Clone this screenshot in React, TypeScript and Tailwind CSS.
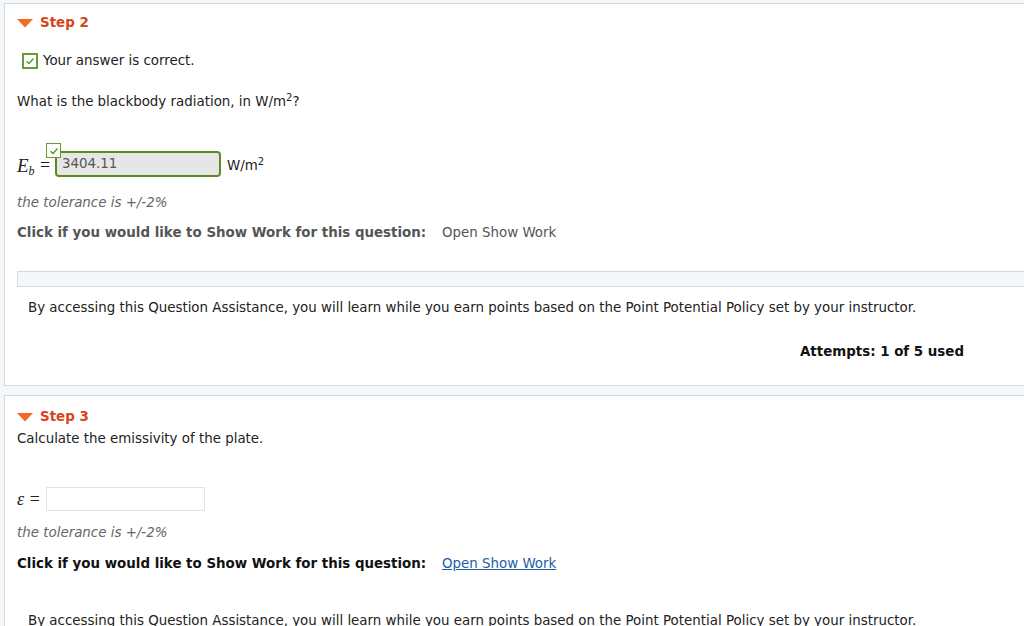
import React from "react";

const FONT = { fontFamily: "'DejaVu Sans', Verdana, sans-serif" };
const SERIF = { fontFamily: "'Liberation Serif', 'Times New Roman', serif" };

function Caret() {
  return (
    <svg width="16" height="9" viewBox="0 0 16 9" className="shrink-0">
      <path d="M0 0 H16 L8 8.5 Z" fill="#f26a25" />
    </svg>
  );
}

function Check({ size = 16, thin = false }: { size?: number; thin?: boolean }) {
  return (
    <span
      className={
        "flex items-center justify-center border-[#6a9c32] bg-white " + (thin ? "border" : "border-2")
      }
      style={{ width: size, height: size }}
    >
      <svg width="10" height="8" viewBox="0 0 10 8">
        <path d="M1.5 4.2 L4 6.5 L8.5 1.5" fill="none" stroke="#5a9a26" strokeWidth="1.4" />
      </svg>
    </span>
  );
}

function StepHeader({ n }: { n: number }) {
  return (
    <div className="flex h-[20px] items-center gap-[7px] pt-[2px]">
      <Caret />
      <span className="text-[13.4px] font-bold text-[#d8431a]">Step {n}</span>
    </div>
  );
}

function Assistance({ className = "" }: { className?: string }) {
  return (
    <div className={"flex h-[20px] items-center pl-[11px] pt-[2px] text-[13.4px] text-[#222] " + className}>
      By accessing this Question Assistance, you will learn while you earn points based on the Point Potential Policy set by your instructor.
    </div>
  );
}

export default function App() {
  return (
    <div className="h-[626px] w-[1024px] overflow-hidden bg-[#f4f7fa] pl-[4px] pt-[3px]" style={FONT}>
      {/* Step 2 */}
      <section className="border border-r-0 border-[#d3d9e0] bg-white pb-[24px] pl-3">
        <div className="mt-[8px]">
          <StepHeader n={2} />
        </div>
        <div className="mt-[18px] flex h-[20px] items-center gap-[5px] pl-[5px] pt-[1px] text-[13.4px] text-[#222]">
          <Check />
          <span className="pt-[1px]">Your answer is correct.</span>
        </div>
        <div className="mt-[21px] flex h-[20px] items-center pt-[2px] text-[13.4px] text-[#222]">
          <span>
            What is the blackbody radiation, in W/m<sup className="text-[10px]">2</sup>?
          </span>
        </div>
        <div className="mt-[40px] flex h-[26px] items-end">
          <span className="mb-[-3px] w-[23px] text-[19px] italic text-[#222]" style={SERIF}>
            E<sub className="text-[12px]">b</sub>
          </span>
          <span className="mb-[-2px] w-[15px] text-[18px] text-[#222]" style={SERIF}>=</span>
          <div className="relative">
            <div className="absolute left-[-9px] top-[-8px]">
              <Check size={15} thin />
            </div>
            <div className="flex h-[26px] w-[166px] items-center rounded-[4px] border-2 border-[#5b8c1f] bg-[#e6e6e6] pl-[5px] text-[13.4px] text-[#555]">
              3404.11
            </div>
          </div>
          <span className="mb-[1px] ml-[6px] text-[13.4px] text-[#222]">
            W/m<sup className="text-[10px]">2</sup>
          </span>
        </div>
        <div className="mt-[15px] flex h-[20px] items-center pt-[2px] text-[13.4px] italic text-[#666]">
          the tolerance is +/-2%
        </div>
        <div className="mt-[10px] flex h-[20px] items-center pt-[2px] text-[13.4px] text-[#555]">
          <span className="w-[425px] font-bold">Click if you would like to Show Work for this question:</span>
          <span>Open Show Work</span>
        </div>
        <div className="mt-[29px] h-[16px] border border-r-0 border-[#d3d9e0] bg-[#f4f7fa]" />
        <Assistance className="mt-[10px]" />
        <div className="mt-[24px] flex h-[20px] items-center justify-end pr-[60px] pt-[2px] text-[13.4px] font-bold text-[#111]">
          Attempts: 1 of 5 used
        </div>
      </section>

      {/* Step 3 */}
      <section className="mt-[9px] border border-b-0 border-r-0 border-[#d3d9e0] bg-white pb-[40px] pl-3">
        <div className="mt-[10px]">
          <StepHeader n={3} />
        </div>
        <div className="mt-[2px] flex h-[20px] items-center pt-[2px] text-[13.4px] text-[#222]">
          Calculate the emissivity of the plate.
        </div>
        <div className="mt-[39px] flex h-[24px] items-end">
          <span className="mb-[-2px] w-[29px] text-[18px] italic text-[#222]" style={SERIF}>
            ε =
          </span>
          <div className="h-[24px] w-[159px] border border-[#e3e3e3] bg-white" />
        </div>
        <div className="mt-[11px] flex h-[20px] items-center pt-[2px] text-[13.4px] italic text-[#666]">
          the tolerance is +/-2%
        </div>
        <div className="mt-[11px] flex h-[20px] items-center pt-[2px] text-[13.4px] text-[#111]">
          <span className="w-[425px] font-bold">Click if you would like to Show Work for this question:</span>
          <a className="text-[#1d5ea6] underline">Open Show Work</a>
        </div>
        <Assistance className="mt-[37px]" />
      </section>
    </div>
  );
}
